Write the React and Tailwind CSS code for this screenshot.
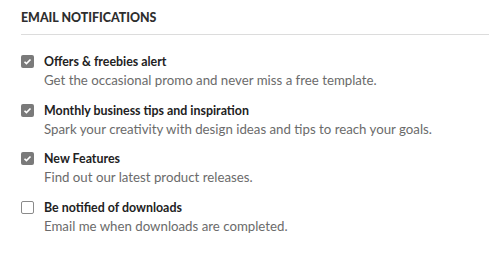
import React from "react";

const items = [
  { title: "Offers & freebies alert", desc: "Get the occasional promo and never miss a free template.", checked: true },
  { title: "Monthly business tips and inspiration", desc: "Spark your creativity with design ideas and tips to reach your goals.", checked: true },
  { title: "New Features", desc: "Find out our latest product releases.", checked: true },
  { title: "Be notified of downloads", desc: "Email me when downloads are completed.", checked: false },
];

const Check = ({ checked }) =>
  checked ? (
    <span className="mt-[2px] flex h-[13px] w-[13px] shrink-0 items-center justify-center rounded-[2px] bg-[#7a7a7a]">
      <svg viewBox="0 0 12 12" className="h-[9px] w-[9px]">
        <path d="M2 6.3l2.6 2.6L10 3.3" fill="none" stroke="#fff" strokeWidth="2.2" />
      </svg>
    </span>
  ) : (
    <span className="mt-[2px] h-[13px] w-[13px] shrink-0 rounded-[2px] border border-[#8a8a8a] bg-white" />
  );

export default function App() {
  return (
    <div className="h-[254px] w-[504px] bg-white px-[21px] pt-[11px]" style={{ fontFamily: "Lato, 'Liberation Sans', sans-serif" }}>
      <div className="mr-[-6px] border-b border-[#dcdcdc] pb-[9px] text-[12.4px] font-black leading-[14px] text-[#2e2e2e]">
        EMAIL NOTIFICATIONS
      </div>
      <div className="mt-[18px] flex flex-col gap-[12.5px]">
        {items.map((it) => (
          <div key={it.title} className="flex gap-[10px]">
            <Check checked={it.checked} />
            <div>
              <div className="text-[12.4px] font-bold leading-[17px] text-[#222]">{it.title}</div>
              <div className="mt-[2px] text-[13.25px] leading-[17px] text-[#6b6b6b]">{it.desc}</div>
            </div>
          </div>
        ))}
      </div>
    </div>
  );
}
